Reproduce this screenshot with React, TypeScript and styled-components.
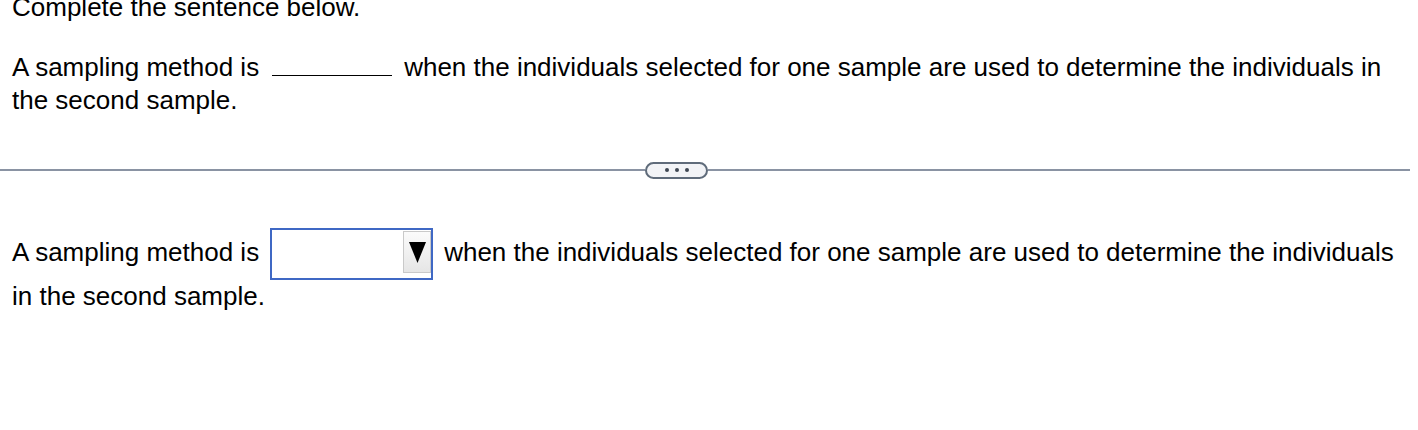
import React from 'react'
import styled, { createGlobalStyle } from 'styled-components'

const GlobalStyle = createGlobalStyle`
  html, body {
    margin: 0;
    padding: 0;
    background: #ffffff;
    overflow: hidden;
  }
  body {
    font-family: "Liberation Sans", Arial, sans-serif;
    color: #000000;
  }
`

const Page = styled.div`
  width: 1418px;
  margin-top: -9px;
  font-size: 26px;
  line-height: 33px;
`

const Question = styled.div`
  padding: 0 13px 0 12px;
`

const Para = styled.p<{ $gap?: number }>`
  margin: 0 0 ${p => p.$gap ?? 27}px 0;
`

const Blank = styled.span`
  display: inline-block;
  width: 120px;
  height: 24px;
  margin: 0 12px 0 13px;
  border-bottom: 1.5px solid #000;
  vertical-align: baseline;
`

const DividerRow = styled.div`
  display: flex;
  align-items: center;
  width: 1410px;
  height: 20px;
  margin: 43px 0 0 0;
`

const Rule = styled.div<{ $grow?: boolean }>`
  height: 2px;
  background: #8a93a3;
  flex: ${p => (p.$grow ? '1' : '0 0 645px')};
`

const Pill = styled.div`
  flex: 0 0 auto;
  width: 59px;
  height: 13px;
  border: 2px solid #5f6b7a;
  border-radius: 9px;
  background: #f2f3f6;
  display: flex;
  align-items: center;
  justify-content: center;
  gap: 6px;
`

const Dot = styled.span`
  width: 4px;
  height: 4px;
  border-radius: 50%;
  background: #3f4753;
`

const Answer = styled.div`
  padding: 48px 13px 0 12px;
`

const Select = styled.span`
  display: inline-flex;
  justify-content: flex-end;
  align-items: flex-start;
  box-sizing: border-box;
  width: 163px;
  height: 52px;
  margin: 0 11px 0 11px;
  border: 2px solid #3f68c4;
  padding: 1px 0 0 0;
  vertical-align: middle;
`

const ArrowButton = styled.span`
  box-sizing: border-box;
  width: 28px;
  height: 42px;
  border: 1px solid #c9c9c9;
  background: linear-gradient(#fbfbfb, #e6e6e6);
  display: flex;
  align-items: center;
  justify-content: center;
`

export default function App() {
  return (
    <>
      <GlobalStyle />
      <Page>
        <Question>
          <Para>Complete the sentence below.</Para>
          <Para $gap={0}>
            A sampling method is<Blank />when the individuals selected for one sample are used to determine the individuals in the second sample.
          </Para>
        </Question>

        <DividerRow>
          <Rule />
          <Pill>
            <Dot />
            <Dot />
            <Dot />
          </Pill>
          <Rule $grow />
        </DividerRow>

        <Answer>
          A sampling method is
          <Select>
            <ArrowButton>
              <svg width="17" height="21" viewBox="0 0 17 21">
                <polygon points="0,0 17,0 8.5,21" fill="#000" />
              </svg>
            </ArrowButton>
          </Select>
          when the individuals selected for one sample are used to determine the individuals in the second sample.
        </Answer>
      </Page>
    </>
  )
}
